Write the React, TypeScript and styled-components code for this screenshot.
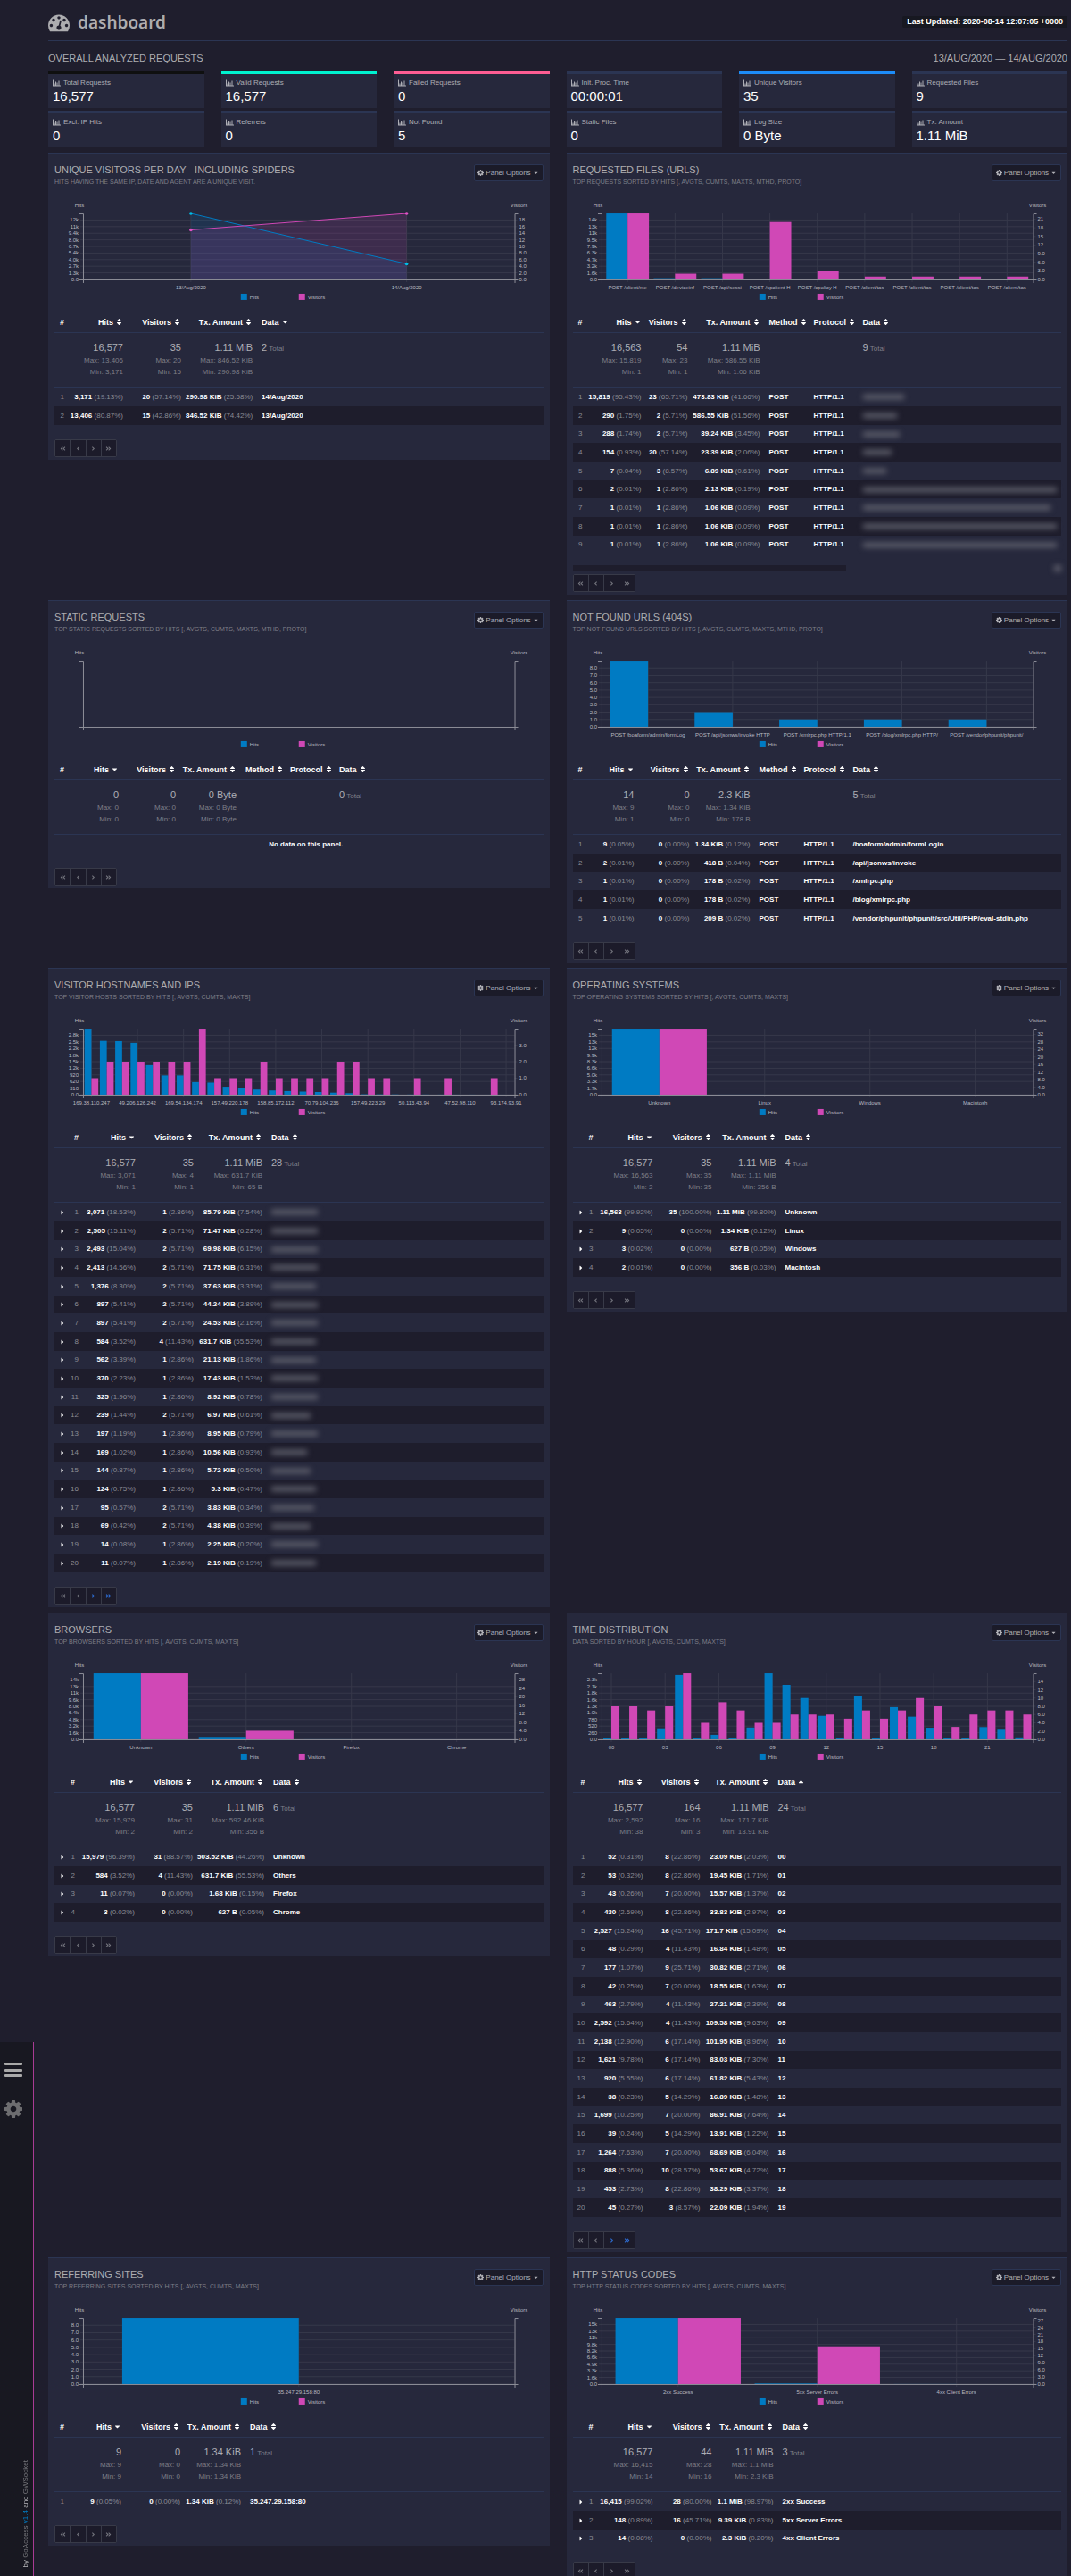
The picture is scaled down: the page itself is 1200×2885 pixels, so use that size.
import React from 'react';
import styled, { createGlobalStyle, css } from 'styled-components';
import {
  FaAngleDoubleLeft,
  FaAngleDoubleRight,
  FaAngleLeft,
  FaAngleRight,
  FaCaretDown,
  FaCaretRight,
  FaCaretUp,
  FaSort,
} from 'react-icons/fa';

const color = {
  page: '#1f1e2d',
  panel: '#26283c',
  stripe: '#1e1d2c',
  nav: '#181821',
  line: '#2b3553',
  axis: '#8e8f99',
  heading: '#adadb1',
  muted: '#8b8c95',
  note: '#7e7f88',
  soft: '#adaeb5',
  hits: '#007bc3',
  visitors: '#d048b6',
};

const GlobalStyle = createGlobalStyle`
  *, *::before, *::after { box-sizing: border-box; }
  body {
    margin: 0;
    background: ${color.page};
    color: #fff;
    font: 8px/12px "Liberation Sans", Arial, sans-serif;
  }
  h1, h2, h3, p, dl, dt, dd { margin: 0; font-weight: 400; }
  a { color: inherit; text-decoration: none; }
  button { font: inherit; cursor: pointer; }
`;

const Shell = styled.div`
  display: flex;
  min-height: 100vh;
`;

const Nav = styled.nav`
  position: sticky;
  bottom: 0;
  align-self: flex-end;
  flex: 0 0 38px;
  height: 605px;
  padding: 20px 0 16px 5px;
  display: flex;
  flex-direction: column;
  align-items: flex-start;
  gap: 22px;
  background: ${color.nav};
  border-right: 1px solid #a83b94;
`;

const NavButton = styled.button<{ $bright?: boolean }>`
  width: 20px;
  height: 22px;
  padding: 0;
  border: 0;
  background: none;
  color: ${(p) => (p.$bright ? '#a9a9a9' : '#6d6d70')};
  display: flex;
  align-items: center;
  justify-content: center;
`;

const Credit = styled.p`
  margin-top: auto;
  margin-left: 18px;
  writing-mode: vertical-rl;
  transform: rotate(180deg);
  line-height: 12px;
  color: #b5b5b8;
`;

const CreditLink = styled.a<{ $accent?: boolean }>`
  color: ${(p) => (p.$accent ? color.hits : '#77777c')};
`;

const Main = styled.main`
  flex: 1;
  min-width: 0;
  padding: 0 4px 0 16px;
`;

const Header = styled.header`
  height: 46px;
  padding-top: 4px;
  display: flex;
  align-items: center;
  justify-content: space-between;
  border-bottom: 1px solid ${color.line};
`;

const Brand = styled.h1`
  display: flex;
  align-items: center;
  gap: 9px;
  color: #adadb0;
  font: 600 19px/24px "Noto Sans", "Open Sans", sans-serif;
`;

const Updated = styled.span`
  padding: 0 5px;
  border-radius: 2px;
  background: #171821;
  font-size: 9px;
  line-height: 13px;
  font-weight: 700;
`;

const SectionHead = styled.div`
  margin: 11px 0 7px;
  display: flex;
  justify-content: space-between;
  color: ${color.heading};
`;

const SectionTitle = styled.h2`
  font-size: 11px;
  line-height: 16px;
`;

const Stats = styled.dl`
  display: grid;
  grid-template-columns: repeat(6, 1fr);
  gap: 3px 19px;
`;

const Stat = styled.div<{ $accent: string }>`
  padding: 4px 5px 5px;
  border-top: 3px solid ${(p) => p.$accent};
  background: ${color.panel};
`;

const StatLabel = styled.dt`
  display: flex;
  align-items: center;
  gap: 3px;
  line-height: 12px;
  color: ${color.soft};
`;

const StatValue = styled.dd`
  font-size: 15px;
  line-height: 17px;
`;

const Panels = styled.div`
  margin-top: 6px;
  display: grid;
  grid-template-columns: repeat(2, minmax(0, 1fr));
  gap: 6px 19px;
  align-items: start;
`;

const Panel = styled.section`
  padding: 12px 7px 3px;
  border-top: 1px solid ${color.line};
  background: ${color.panel};
`;

const PanelHead = styled.div`
  height: 25px;
  display: flex;
  justify-content: space-between;
  align-items: flex-start;
`;

const PanelTitle = styled.h3`
  font-size: 11px;
  line-height: 13px;
  color: ${color.heading};
`;

const PanelNote = styled.p`
  font-size: 7px;
  line-height: 13px;
  color: ${color.note};
`;

const OptionsButton = styled.button`
  width: 78px;
  height: 19px;
  padding: 0;
  display: flex;
  align-items: center;
  justify-content: center;
  gap: 2px;
  border: 1px solid ${color.line};
  border-radius: 2px;
  background: #1b1b29;
  color: #b0b0b6;
`;

const Plot = styled.svg`
  display: block;
  width: 100%;
  height: 114px;
  margin: 16px 0 10px;
  font-size: 6px;
`;

const Table = styled.table`
  width: 100%;
  table-layout: fixed;
  border-spacing: 0;
`;

const Th = styled.th<{ $right?: boolean }>`
  height: 24px;
  padding: 0 5px 0 ${(p) => (p.$right ? 0 : 5)}px;
  border-bottom: 1px solid ${color.line};
  font-size: 9px;
  font-weight: 700;
  text-align: ${(p) => (p.$right ? 'right' : 'left')};
  white-space: nowrap;
  & > svg { margin-left: 2px; vertical-align: -1px; }
`;

const MetaCell = styled.td<{ $right?: boolean }>`
  height: 60px;
  padding: 10px 5px 10px ${(p) => (p.$right ? 0 : 5)}px;
  border-bottom: 1px solid ${color.line};
  vertical-align: top;
  text-align: ${(p) => (p.$right ? 'right' : 'left')};
  line-height: 13px;
  color: ${color.note};
  white-space: nowrap;
`;

const Sum = styled.span`
  font-size: 11px;
  color: ${color.soft};
`;

const Row = styled.tr`
  &:nth-child(even) > td { background: ${color.stripe}; }
  &:nth-child(3n) > td { height: 20px; }
`;

const Td = styled.td<{ $right?: boolean; $center?: boolean }>`
  height: 21px;
  padding: 0 5px 0 ${(p) => (p.$right ? 0 : 5)}px;
  font-weight: 700;
  white-space: nowrap;
  ${(p) => p.$right && css`text-align: right;`}
  ${(p) => p.$center && css`text-align: center;`}
  & > svg { display: block; }
`;

const Light = styled.span`
  font-weight: 400;
  color: ${color.muted};
`;

const Redacted = styled.span`
  display: block;
  height: 5px;
  max-width: 100%;
  background: #656672;
  filter: blur(3px);
`;

const ScrollTrack = styled.div`
  margin-top: 13px;
  height: 7px;
  display: flex;
  justify-content: space-between;
`;

const ScrollThumb = styled.div`
  width: 56%;
  background: ${color.stripe};
`;

const ScrollEnd = styled.div`
  width: 8px;
  background: #5d5e6b;
  filter: blur(3px);
`;

const Pager = styled.div<{ $tight?: boolean }>`
  width: 70px;
  height: 20px;
  margin-top: ${(p) => (p.$tight ? 3 : 16)}px;
  display: flex;
  border: 1px solid #383a48;
  border-radius: 2px;
`;

const PageButton = styled.button<{ $on?: boolean }>`
  flex: 1;
  padding: 0;
  display: flex;
  align-items: center;
  justify-content: center;
  border: 0;
  background: #1c1b2a;
  color: ${(p) => (p.$on ? '#2e6cd1' : '#73747d')};
  & + & { border-left: 1px solid #383a48; }
`;

const GaugeIcon = () => (
  <svg width="24" height="24" viewBox="0 0 1792 1792" fill="currentColor" aria-hidden="true">
    <path d="M384 1152q0-53-37.5-90.5t-90.5-37.5-90.5 37.5-37.5 90.5 37.5 90.5 90.5 37.5 90.5-37.5 37.5-90.5zm192-448q0-53-37.5-90.5t-90.5-37.5-90.5 37.5-37.5 90.5 37.5 90.5 90.5 37.5 90.5-37.5 37.5-90.5zm428 481l101-382q6-26-7.5-48.5t-38.5-29.5-48 6.5-30 39.5l-101 382q-60 5-107 43.5t-63 98.5q-20 77 20 146t117 89 146-20 89-117q16-60-6-117t-72-91zm660-33q0-53-37.5-90.5t-90.5-37.5-90.5 37.5-37.5 90.5 37.5 90.5 90.5 37.5 90.5-37.5 37.5-90.5zm-640-640q0-53-37.5-90.5t-90.5-37.5-90.5 37.5-37.5 90.5 37.5 90.5 90.5 37.5 90.5-37.5 37.5-90.5zm448 192q0-53-37.5-90.5t-90.5-37.5-90.5 37.5-37.5 90.5 37.5 90.5 90.5 37.5 90.5-37.5 37.5-90.5zm320 448q0 261-141 483-19 29-54 29h-1402q-35 0-54-29-141-221-141-483 0-182 71-348t191-286 286-191 348-71 348 71 286 191 191 286 71 348z" />
  </svg>
);

const CogIcon = ({ size }: { size: number }) => (
  <svg width={size} height={size} viewBox="128 128 1536 1536" fill="currentColor" aria-hidden="true">
    <path d="M1152 896q0-106-75-181t-181-75-181 75-75 181 75 181 181 75 181-75 75-181zm512-109v222q0 12-8 23t-20 13l-185 28q-19 54-39 91 35 50 107 138 10 12 10 25t-9 23q-27 37-99 108t-94 71q-12 0-26-9l-138-108q-44 23-91 38-16 136-29 186-7 28-36 28h-222q-14 0-24.5-8.5t-11.5-21.5l-28-184q-49-16-90-37l-141 107q-10 9-25 9-14 0-25-11-126-114-165-168-7-10-7-23 0-12 8-23 15-21 51-66.5t54-70.5q-27-50-41-99l-183-27q-13-2-21-12.5t-8-23.5v-222q0-12 8-23t19-13l186-28q14-46 39-92-40-57-107-138-10-12-10-24 0-10 9-23 26-36 98.5-107.5t94.5-71.5q13 0 26 10l138 107q44-23 91-38 16-136 29-186 7-28 36-28h222q14 0 24.5 8.5t11.5 21.5l28 184q49 16 90 37l142-107q9-9 24-9 13 0 25 10 129 119 165 170 7 8 7 22 0 12-8 23-15 21-51 66.5t-54 70.5q26 50 41 98l183 28q13 2 21 12.5t8 23.5z" />
  </svg>
);

const BarsIcon = () => (
  <svg width="20" height="18" viewBox="0 0 20 18" fill="currentColor" aria-hidden="true">
    <rect y="1" width="20" height="3" rx="1" />
    <rect y="8" width="20" height="3" rx="1" />
    <rect y="14" width="20" height="3" rx="1" />
  </svg>
);

const ChartIcon = () => (
  <svg width="9" height="8" viewBox="0 0 18 16" fill="currentColor" aria-hidden="true">
    <path d="M0 1h2v12h16v2H0zM3 9h2v4H3zM6 5h2v8H6zM9 7h2v6H9zM13 3h2v10h-2z" />
  </svg>
);

const stats = [
  ['Total Requests', '16,577', '#0f1010'],
  ['Valid Requests', '16,577', '#00f2d0'],
  ['Failed Requests', '0', '#fd5d93'],
  ['Init. Proc. Time', '00:00:01', color.line],
  ['Unique Visitors', '35', '#1d8cf8'],
  ['Requested Files', '9', color.line],
  ['Excl. IP Hits', '0', color.line],
  ['Referrers', '0', color.line],
  ['Not Found', '5', color.line],
  ['Static Files', '0', color.line],
  ['Log Size', '0 Byte', color.line],
  ['Tx. Amount', '1.11 MiB', color.line],
];

type PanelSpec = {
  title: string;
  note: string;
  hits: number[];
  visitors: number[];
  labels: string[];
  every?: number;
  area?: boolean;
  left: string[];
  right: [string[], number];
  cols: number[];
  expand?: boolean;
  request?: boolean;
  sort: 'Hits' | 'Data';
  up?: boolean;
  meta: string[][];
  total: string;
  rows: string[];
  redacted?: number[];
  scroll?: boolean;
  more?: boolean;
};

const k = (s: string) => s.split(' ');

const panels: PanelSpec[] = [
  {
    title: 'UNIQUE VISITORS PER DAY - INCLUDING SPIDERS',
    note: 'HITS HAVING THE SAME IP, DATE AND AGENT ARE A UNIQUE VISIT.',
    hits: [13406, 3171],
    visitors: [15, 20],
    labels: ['13/Aug/2020', '14/Aug/2020'],
    area: true,
    left: k('0.0 1.3k 2.7k 4.0k 5.4k 6.7k 8.0k 9.4k 11k 12k'),
    right: [k('0.0 2.0 4.0 6.0 8.0 10 12 14 16 18'), 2],
    cols: [16, 66, 65, 80],
    sort: 'Data',
    meta: [['16,577', '13,406', '3,171'], ['35', '20', '15'], ['1.11 MiB', '846.52 KiB', '290.98 KiB']],
    total: '2',
    rows: ['3,171|19.13|20|57.14|290.98 KiB|25.58|14/Aug/2020', '13,406|80.87|15|42.86|846.52 KiB|74.42|13/Aug/2020'],
  },
  {
    title: 'REQUESTED FILES (URLS)',
    note: 'TOP REQUESTS SORTED BY HITS [, AVGTS, CUMTS, MAXTS, MTHD, PROTO]',
    hits: [15819, 290, 288, 154, 7, 2, 1, 1, 1],
    visitors: [23, 2, 2, 20, 3, 1, 1, 1, 1],
    labels: ['POST /client/me', 'POST /deviceinf', 'POST /api/sessi', 'POST /spclient H', 'POST /cpolicy H', 'POST /client/tas', 'POST /client/tas', 'POST /client/tas', 'POST /client/tas'],
    left: k('0.0 1.6k 3.2k 4.7k 6.3k 7.9k 9.5k 11k 13k 14k'),
    right: [k('0.0 3.0 6.0 9.0 12 15 18 21'), 3],
    cols: [16, 66, 52, 81, 50, 55],
    request: true,
    sort: 'Hits',
    meta: [['16,563', '15,819', '1'], ['54', '23', '1'], ['1.11 MiB', '586.55 KiB', '1.06 KiB']],
    total: '9',
    rows: ['15,819|95.43|23|65.71|473.83 KiB|41.66|', '290|1.75|2|5.71|586.55 KiB|51.56|', '288|1.74|2|5.71|39.24 KiB|3.45|', '154|0.93|20|57.14|23.39 KiB|2.06|', '7|0.04|3|8.57|6.89 KiB|0.61|', '2|0.01|1|2.86|2.13 KiB|0.19|', '1|0.01|1|2.86|1.06 KiB|0.09|', '1|0.01|1|2.86|1.06 KiB|0.09|', '1|0.01|1|2.86|1.06 KiB|0.09|'],
    redacted: [46, 38, 41, 32, 26, 222, 210, 222, 222],
    scroll: true,
  },
  {
    title: 'STATIC REQUESTS',
    note: 'TOP STATIC REQUESTS SORTED BY HITS [, AVGTS, CUMTS, MAXTS, MTHD, PROTO]',
    hits: [],
    visitors: [],
    labels: [],
    left: [],
    right: [[], 1],
    cols: [16, 61, 64, 68, 50, 55],
    request: true,
    sort: 'Hits',
    meta: [['0', '0', '0'], ['0', '0', '0'], ['0 Byte', '0 Byte', '0 Byte']],
    total: '0',
    rows: [],
  },
  {
    title: 'NOT FOUND URLS (404S)',
    note: 'TOP NOT FOUND URLS SORTED BY HITS [, AVGTS, CUMTS, MAXTS, MTHD, PROTO]',
    hits: [9, 2, 1, 1, 1],
    visitors: [0, 0, 0, 0, 0],
    labels: ['POST /boaform/admin/formLog', 'POST /api/jsonws/invoke HTTP', 'POST /xmlrpc.php HTTP/1.1', 'POST /blog/xmlrpc.php HTTP/', 'POST /vendor/phpunit/phpunit/'],
    left: k('0.0 1.0 2.0 3.0 4.0 5.0 6.0 7.0 8.0'),
    right: [[], 1],
    cols: [16, 58, 62, 68, 50, 55],
    request: true,
    sort: 'Hits',
    meta: [['14', '9', '1'], ['0', '0', '0'], ['2.3 KiB', '1.34 KiB', '178 B']],
    total: '5',
    rows: ['9|0.05|0|0.00|1.34 KiB|0.12|/boaform/admin/formLogin', '2|0.01|0|0.00|418 B|0.04|/api/jsonws/invoke', '1|0.01|0|0.00|178 B|0.02|/xmlrpc.php', '1|0.01|0|0.00|178 B|0.02|/blog/xmlrpc.php', '1|0.01|0|0.00|209 B|0.02|/vendor/phpunit/phpunit/src/Util/PHP/eval-stdin.php'],
  },
  {
    title: 'VISITOR HOSTNAMES AND IPS',
    note: 'TOP VISITOR HOSTS SORTED BY HITS [, AVGTS, CUMTS, MAXTS]',
    hits: [3071, 2505, 2493, 2413, 1376, 897, 897, 584, 562, 370, 325, 239, 197, 169, 144, 124, 95, 69, 14, 11, 8, 5, 4, 3, 2, 2, 1, 1],
    visitors: [1, 2, 2, 2, 2, 2, 2, 4, 1, 1, 1, 2, 1, 1, 1, 1, 2, 2, 1, 1, 0, 1, 0, 1, 0, 0, 1, 0],
    labels: ['169.38.110.247', '49.206.126.242', '169.54.134.174', '157.49.220.178', '158.85.172.112', '70.79.104.236', '157.49.223.29', '50.113.43.94', '47.52.98.110', '93.174.93.91'],
    every: 3,
    left: k('0.0 310 620 920 1.2k 1.5k 1.8k 2.2k 2.5k 2.8k'),
    right: [k('0.0 1.0 2.0 3.0'), 1],
    cols: [19, 64, 65, 77],
    expand: true,
    sort: 'Hits',
    meta: [['16,577', '3,071', '1'], ['35', '4', '1'], ['1.11 MiB', '631.7 KiB', '65 B']],
    total: '28',
    rows: ['3,071|18.53|1|2.86|85.79 KiB|7.54|', '2,505|15.11|2|5.71|71.47 KiB|6.28|', '2,493|15.04|2|5.71|69.98 KiB|6.15|', '2,413|14.56|2|5.71|71.75 KiB|6.31|', '1,376|8.30|2|5.71|37.63 KiB|3.31|', '897|5.41|2|5.71|44.24 KiB|3.89|', '897|5.41|2|5.71|24.53 KiB|2.16|', '584|3.52|4|11.43|631.7 KiB|55.53|', '562|3.39|1|2.86|21.13 KiB|1.86|', '370|2.23|1|2.86|17.43 KiB|1.53|', '325|1.96|1|2.86|8.92 KiB|0.78|', '239|1.44|2|5.71|6.97 KiB|0.61|', '197|1.19|1|2.86|8.95 KiB|0.79|', '169|1.02|1|2.86|10.56 KiB|0.93|', '144|0.87|1|2.86|5.72 KiB|0.50|', '124|0.75|1|2.86|5.3 KiB|0.47|', '95|0.57|2|5.71|3.83 KiB|0.34|', '69|0.42|2|5.71|4.38 KiB|0.39|', '14|0.08|1|2.86|2.25 KiB|0.20|', '11|0.07|1|2.86|2.19 KiB|0.19|'],
    redacted: [52, 52, 52, 52, 50, 52, 52, 50, 50, 52, 52, 44, 52, 40, 44, 50, 48, 44, 52, 50],
    more: true,
  },
  {
    title: 'OPERATING SYSTEMS',
    note: 'TOP OPERATING SYSTEMS SORTED BY HITS [, AVGTS, CUMTS, MAXTS]',
    hits: [16563, 9, 3, 2],
    visitors: [35, 0, 0, 0],
    labels: ['Unknown', 'Linux', 'Windows', 'Macintosh'],
    left: k('0.0 1.7k 3.3k 5.0k 6.6k 8.3k 9.9k 12k 13k 15k'),
    right: [k('0.0 4.0 8.0 12 16 20 24 28 32'), 4],
    cols: [15, 67, 66, 72],
    expand: true,
    sort: 'Hits',
    meta: [['16,577', '16,563', '2'], ['35', '35', '35'], ['1.11 MiB', '1.11 MiB', '356 B']],
    total: '4',
    rows: ['16,563|99.92|35|100.00|1.11 MiB|99.80|Unknown', '9|0.05|0|0.00|1.34 KiB|0.12|Linux', '3|0.02|0|0.00|627 B|0.05|Windows', '2|0.01|0|0.00|356 B|0.03|Macintosh'],
  },
  {
    title: 'BROWSERS',
    note: 'TOP BROWSERS SORTED BY HITS [, AVGTS, CUMTS, MAXTS]',
    hits: [15979, 584, 11, 3],
    visitors: [31, 4, 0, 0],
    labels: ['Unknown', 'Others', 'Firefox', 'Chrome'],
    left: k('0.0 1.6k 3.2k 4.8k 6.4k 8.0k 9.6k 11k 13k 14k'),
    right: [k('0.0 4.0 8.0 12 16 20 24 28'), 4],
    cols: [15, 67, 65, 80],
    expand: true,
    sort: 'Hits',
    meta: [['16,577', '15,979', '2'], ['35', '31', '2'], ['1.11 MiB', '592.46 KiB', '356 B']],
    total: '6',
    rows: ['15,979|96.39|31|88.57|503.52 KiB|44.26|Unknown', '584|3.52|4|11.43|631.7 KiB|55.53|Others', '11|0.07|0|0.00|1.68 KiB|0.15|Firefox', '3|0.02|0|0.00|627 B|0.05|Chrome'],
  },
  {
    title: 'TIME DISTRIBUTION',
    note: 'DATA SORTED BY HOUR [, AVGTS, CUMTS, MAXTS]',
    hits: [52, 53, 43, 430, 2527, 48, 177, 42, 463, 2592, 2138, 1621, 920, 38, 1699, 39, 1264, 888, 453, 45, 44, 480, 410, 75],
    visitors: [8, 8, 7, 8, 16, 4, 9, 7, 4, 4, 6, 6, 6, 5, 7, 5, 7, 10, 8, 3, 6, 7, 7, 6],
    labels: k('00 03 06 09 12 15 18 21'),
    every: 3,
    left: k('0.0 260 520 780 1.0k 1.3k 1.6k 1.8k 2.1k 2.3k'),
    right: [k('0.0 2.0 4.0 6.0 8.0 10 12 14'), 2],
    cols: [19, 65, 64, 77],
    sort: 'Data',
    up: true,
    meta: [['16,577', '2,592', '38'], ['164', '16', '3'], ['1.11 MiB', '171.7 KiB', '13.91 KiB']],
    total: '24',
    rows: ['52|0.31|8|22.86|23.09 KiB|2.03|00', '53|0.32|8|22.86|19.45 KiB|1.71|01', '43|0.26|7|20.00|15.57 KiB|1.37|02', '430|2.59|8|22.86|33.83 KiB|2.97|03', '2,527|15.24|16|45.71|171.7 KiB|15.09|04', '48|0.29|4|11.43|16.84 KiB|1.48|05', '177|1.07|9|25.71|30.82 KiB|2.71|06', '42|0.25|7|20.00|18.55 KiB|1.63|07', '463|2.79|4|11.43|27.21 KiB|2.39|08', '2,592|15.64|4|11.43|109.58 KiB|9.63|09', '2,138|12.90|6|17.14|101.95 KiB|8.96|10', '1,621|9.78|6|17.14|83.03 KiB|7.30|11', '920|5.55|6|17.14|61.82 KiB|5.43|12', '38|0.23|5|14.29|16.89 KiB|1.48|13', '1,699|10.25|7|20.00|86.91 KiB|7.64|14', '39|0.24|5|14.29|13.91 KiB|1.22|15', '1,264|7.63|7|20.00|68.69 KiB|6.04|16', '888|5.36|10|28.57|53.67 KiB|4.72|17', '453|2.73|8|22.86|38.29 KiB|3.37|18', '45|0.27|3|8.57|22.09 KiB|1.94|19'],
    more: true,
  },
  {
    title: 'REFERRING SITES',
    note: 'TOP REFERRING SITES SORTED BY HITS [, AVGTS, CUMTS, MAXTS]',
    hits: [9],
    visitors: [0],
    labels: ['35.247.29.158:80'],
    left: k('0.0 1.0 2.0 3.0 4.0 5.0 6.0 7.0 8.0'),
    right: [[], 1],
    cols: [16, 64, 66, 68],
    sort: 'Hits',
    meta: [['9', '9', '9'], ['0', '0', '0'], ['1.34 KiB', '1.34 KiB', '1.34 KiB']],
    total: '1',
    rows: ['9|0.05|0|0.00|1.34 KiB|0.12|35.247.29.158:80'],
  },
  {
    title: 'HTTP STATUS CODES',
    note: 'TOP HTTP STATUS CODES SORTED BY HITS [, AVGTS, CUMTS, MAXTS]',
    hits: [16415, 148, 14],
    visitors: [28, 16, 0],
    labels: ['2xx Success', '5xx Server Errors', '4xx Client Errors'],
    left: k('0.0 1.6k 3.3k 4.9k 6.6k 8.2k 9.8k 11k 13k 15k'),
    right: [k('0.0 3.0 6.0 9.0 12 15 18 21 24 27'), 3],
    cols: [15, 67, 66, 69],
    expand: true,
    sort: 'Hits',
    meta: [['16,577', '16,415', '14'], ['44', '28', '16'], ['1.11 MiB', '1.1 MiB', '2.3 KiB']],
    total: '3',
    rows: ['16,415|99.02|28|80.00|1.1 MiB|98.97|2xx Success', '148|0.89|16|45.71|9.39 KiB|0.83|5xx Server Errors', '14|0.08|0|0.00|2.3 KiB|0.20|4xx Client Errors'],
  },
];

const X0 = 32;
const X1 = 516;
const TOP = 14;
const BASE = 88;

function Chart({ spec }: { spec: PanelSpec }) {
  const n = spec.hits.length;
  const maxHits = Math.max(1, ...spec.hits);
  const maxVisitors = Math.max(1, ...spec.visitors);
  const pad = spec.area ? 0 : 0.1;
  const step = (X1 - X0) / (n + pad || 1);
  const half = (step * (1 - pad)) / 2;
  const center = (i: number) => X0 + step * (i + pad) + half;
  const yHits = (v: number) => BASE - ((BASE - TOP) * v) / maxHits;
  const yVisitors = (v: number) => BASE - ((BASE - TOP) * v) / maxVisitors;
  const leftStep = maxHits > 9 ? maxHits / 10 : 1;
  const every = spec.every ?? 1;

  return (
    <Plot viewBox="0 0 548 114" role="img" aria-label={`${spec.title} chart`}>
      <g stroke="#36384a" strokeWidth="1">
        {spec.left.map((t, i) => (
          <line key={t} x1={X0 - 3} x2={X1} y1={yHits(i * leftStep)} y2={yHits(i * leftStep)} />
        ))}
        {spec.labels.map((t, i) => (
          <line key={i} x1={center(i * every)} x2={center(i * every)} y1={TOP} y2={BASE + 3} />
        ))}
        {spec.right[0].map((t, i) => (
          <line key={t} x1={X1} x2={X1 + 3} y1={yVisitors(i * spec.right[1])} y2={yVisitors(i * spec.right[1])} />
        ))}
      </g>
      {spec.area ? (
        <g>
          <path d={`M${center(0)} ${yHits(spec.hits[0])}L${center(1)} ${yHits(spec.hits[1])}V${BASE}H${center(0)}Z`} fill={color.hits} opacity="0.14" />
          <path d={`M${center(0)} ${yVisitors(spec.visitors[0])}L${center(1)} ${yVisitors(spec.visitors[1])}V${BASE}H${center(0)}Z`} fill={color.visitors} opacity="0.14" />
          <line x1={center(0)} y1={yHits(spec.hits[0])} x2={center(1)} y2={yHits(spec.hits[1])} stroke={color.hits} />
          <line x1={center(0)} y1={yVisitors(spec.visitors[0])} x2={center(1)} y2={yVisitors(spec.visitors[1])} stroke={color.visitors} />
          {[0, 1].map((i) => (
            <g key={i}>
              <circle cx={center(i)} cy={yHits(spec.hits[i])} r="1.8" fill="#00bfe8" />
              <circle cx={center(i)} cy={yVisitors(spec.visitors[i])} r="1.8" fill="#e252c8" />
            </g>
          ))}
        </g>
      ) : (
        spec.hits.map((h, i) => (
          <g key={i}>
            <rect x={center(i) - half} y={yHits(h)} width={half} height={BASE - yHits(h)} fill={color.hits} />
            <rect x={center(i)} y={yVisitors(spec.visitors[i])} width={half} height={BASE - yVisitors(spec.visitors[i])} fill={color.visitors} />
          </g>
        ))
      )}
      <g fill="none" stroke={color.axis} strokeWidth="1">
        <path d={`M${X0 - 4} ${TOP + 0.5}H${X0 + 0.5}V${BASE + 4}`} />
        <path d={`M${X1 + 4} ${TOP + 0.5}H${X1 + 0.5}V${BASE + 4}`} />
        <path d={`M${X0 - 4} ${BASE + 0.5}H${X1 + 4}`} />
      </g>
      <g fill="#b9bac0">
        <text x="28" y="7" textAnchor="middle">Hits</text>
        <text x="521" y="7" textAnchor="middle">Visitors</text>
        {spec.left.map((t, i) => (
          <text key={t} x={X0 - 5} y={yHits(i * leftStep) + 2} textAnchor="end">{t}</text>
        ))}
        {spec.right[0].map((t, i) => (
          <text key={t} x={X1 + 5} y={yVisitors(i * spec.right[1]) + 2}>{t}</text>
        ))}
        {spec.labels.map((t, i) => (
          <text key={i} x={center(i * every)} y={BASE + 11} textAnchor="middle">{t}</text>
        ))}
        <text x="219" y="110">Hits</text>
        <text x="284" y="110">Visitors</text>
      </g>
      <rect x="209" y="104" width="7" height="7" fill={color.hits} />
      <rect x="274" y="104" width="7" height="7" fill={color.visitors} />
    </Plot>
  );
}

function PanelTable({ spec }: { spec: PanelSpec }) {
  const heads = ['Hits', 'Visitors', 'Tx. Amount', ...(spec.request ? ['Method', 'Protocol'] : []), 'Data'];
  return (
    <Table>
      <colgroup>
        {spec.expand && <col style={{ width: 13 }} />}
        {spec.cols.map((w, i) => <col key={i} style={{ width: w }} />)}
        <col />
      </colgroup>
      <thead>
        <tr>
          {spec.expand && <Th aria-label="Expand" />}
          <Th $right>#</Th>
          {heads.map((h, i) => (
            <Th key={h} $right={i < 3}>
              {h}
              {h !== spec.sort ? <FaSort size={9} /> : spec.up ? <FaCaretUp size={9} /> : <FaCaretDown size={9} />}
            </Th>
          ))}
        </tr>
      </thead>
      <tbody>
        <tr>
          {spec.expand && <MetaCell />}
          <MetaCell />
          {spec.meta.map(([sum, max, min], i) => (
            <MetaCell key={i} $right>
              <Sum>{sum}</Sum><br />Max: {max}<br />Min: {min}
            </MetaCell>
          ))}
          {spec.request && <><MetaCell /><MetaCell /></>}
          <MetaCell><Sum>{spec.total}</Sum> Total</MetaCell>
        </tr>
      </tbody>
      <tbody>
        {spec.rows.length === 0 && (
          <Row>
            <Td />
            <Td $center colSpan={heads.length}>No data on this panel.</Td>
          </Row>
        )}
        {spec.rows.map((row, r) => {
          const f = row.split('|');
          return (
            <Row key={r}>
              {spec.expand && <Td><FaCaretRight size={8} /></Td>}
              <Td $right><Light>{r + 1}</Light></Td>
              {[0, 2, 4].map((c) => (
                <Td key={c} $right>{f[c]} <Light>({f[c + 1]}%)</Light></Td>
              ))}
              {spec.request && <><Td>POST</Td><Td>HTTP/1.1</Td></>}
              <Td>{spec.redacted ? <Redacted style={{ width: spec.redacted[r] }} /> : f[6]}</Td>
            </Row>
          );
        })}
      </tbody>
    </Table>
  );
}

export default function App() {
  return (
    <>
      <GlobalStyle />
      <Shell>
        <Nav aria-label="Panels">
          <NavButton $bright aria-label="Menu"><BarsIcon /></NavButton>
          <NavButton aria-label="Settings"><CogIcon size={20} /></NavButton>
          <Credit>
            by <CreditLink href="#goaccess">GoAccess</CreditLink> <CreditLink $accent href="#version">v1.4</CreditLink> and <CreditLink href="#gwsocket">GWSocket</CreditLink>
          </Credit>
        </Nav>
        <Main>
          <Header>
            <Brand><GaugeIcon />dashboard</Brand>
            <Updated>Last Updated: 2020-08-14 12:07:05 +0000</Updated>
          </Header>
          <SectionHead>
            <SectionTitle>OVERALL ANALYZED REQUESTS</SectionTitle>
            <SectionTitle as="p">13/AUG/2020 — 14/AUG/2020</SectionTitle>
          </SectionHead>
          <Stats>
            {stats.map(([label, value, accent]) => (
              <Stat key={label} $accent={accent}>
                <StatLabel><ChartIcon />{label}</StatLabel>
                <StatValue>{value}</StatValue>
              </Stat>
            ))}
          </Stats>
          <Panels>
            {panels.map((spec) => (
              <Panel key={spec.title}>
                <PanelHead>
                  <div>
                    <PanelTitle>{spec.title}</PanelTitle>
                    <PanelNote>{spec.note}</PanelNote>
                  </div>
                  <OptionsButton><CogIcon size={7} />Panel Options<FaCaretDown size={7} /></OptionsButton>
                </PanelHead>
                <Chart spec={spec} />
                <PanelTable spec={spec} />
                {spec.scroll && <ScrollTrack><ScrollThumb /><ScrollEnd /></ScrollTrack>}
                <Pager $tight={spec.scroll}>
                  <PageButton aria-label="First page"><FaAngleDoubleLeft size={7} /></PageButton>
                  <PageButton aria-label="Previous page"><FaAngleLeft size={7} /></PageButton>
                  <PageButton $on={spec.more} aria-label="Next page"><FaAngleRight size={7} /></PageButton>
                  <PageButton $on={spec.more} aria-label="Last page"><FaAngleDoubleRight size={7} /></PageButton>
                </Pager>
              </Panel>
            ))}
          </Panels>
        </Main>
      </Shell>
    </>
  );
}
